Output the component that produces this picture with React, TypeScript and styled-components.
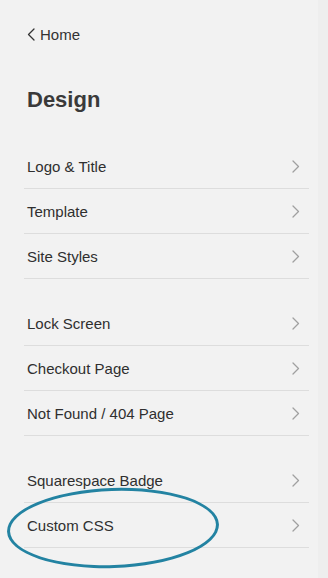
import { createGlobalStyle } from "styled-components";
import styled from "styled-components";

const GlobalStyle = createGlobalStyle`
  html, body {
    margin: 0;
    padding: 0;
    background: #f2f2f2;
  }
  body {
    font-family: "Liberation Sans", Arial, sans-serif;
    color: #333333;
  }
`;

const groups = [
  ["Logo & Title", "Template", "Site Styles"],
  ["Lock Screen", "Checkout Page", "Not Found / 404 Page"],
  ["Squarespace Badge", "Custom CSS"],
];

function Chevron({ left }: { left?: boolean }) {
  return (
    <svg width="8" height="13" viewBox="0 0 8 13" fill="none">
      <path
        d={left ? "M7 1 L1.5 6.5 L7 12" : "M1 1 L6.5 6.5 L1 12"}
        stroke="currentColor"
        strokeWidth="1.3"
        strokeLinecap="round"
        strokeLinejoin="round"
      />
    </svg>
  );
}

export default function App() {
  return (
    <>
      <GlobalStyle />
      <Page>
        <Panel>
          <BackLink>
            <Chevron left />
            <span>Home</span>
          </BackLink>
          <Title>Design</Title>
          {groups.map((items, gi) => (
            <Group key={gi}>
              {items.map((label) => (
                <Row key={label}>
                  <Label>{label}</Label>
                  <Arrow>
                    <Chevron />
                  </Arrow>
                  {label === "Custom CSS" && <Highlight />}
                </Row>
              ))}
            </Group>
          ))}
        </Panel>
        <Edge />
      </Page>
    </>
  );
}

const Page = styled.div`
  display: flex;
  width: 328px;
  height: 578px;
  overflow: hidden;
`;

const Panel = styled.div`
  flex: 1;
  padding: 0 9px 0 24px;
  display: flex;
  flex-direction: column;
`;

const Edge = styled.div`
  width: 10px;
  background: #eeeeee;
`;

const BackLink = styled.div`
  display: flex;
  align-items: center;
  gap: 5px;
  margin-top: 25px;
  padding-left: 3px;
  height: 18px;
  font-size: 15px;
  color: #333333;
`;

const Title = styled.h1`
  margin: 44px 0 31px 3px;
  font-size: 22px;
  font-weight: 700;
  line-height: 26px;
  color: #3a3a3a;
`;

const Group = styled.div`
  display: flex;
  flex-direction: column;

  & + & {
    margin-top: 22px;
  }
`;

const Row = styled.div`
  position: relative;
  display: flex;
  align-items: center;
  justify-content: space-between;
  height: 44px;
  border-bottom: 1px solid #dddddd;
  padding: 0 9px 0 3px;
`;

const Label = styled.span`
  font-size: 15px;
  color: #2f2f2f;
`;

const Arrow = styled.span`
  display: flex;
  color: #a0a0a0;
`;

const Highlight = styled.div`
  position: absolute;
  left: -17px;
  top: -15px;
  width: 206px;
  height: 74px;
  border: 3px solid #2383a2;
  border-radius: 50%;
  transform: rotate(-2deg);
  pointer-events: none;
`;
